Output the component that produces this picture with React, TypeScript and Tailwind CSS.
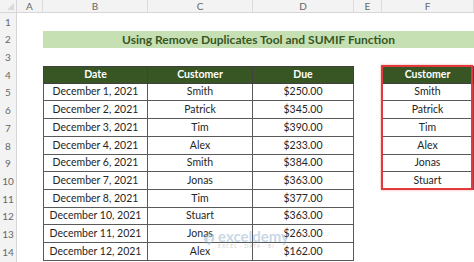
import React from 'react';

// sheet rows 1..14, heights chosen so the grid lands on the screenshot's pixels
const rowHeights = [18, 17, 18, 18, 17, 18, 18, 18, 17, 18, 18, 17, 18, 18];

const data = [
  ['December 1, 2021', 'Smith', '$250.00'],
  ['December 2, 2021', 'Patrick', '$345.00'],
  ['December 3, 2021', 'Tim', '$390.00'],
  ['December 4, 2021', 'Alex', '$233.00'],
  ['December 6, 2021', 'Smith', '$384.00'],
  ['December 7, 2021', 'Jonas', '$363.00'],
  ['December 8, 2021', 'Tim', '$377.00'],
  ['December 10, 2021', 'Stuart', '$363.00'],
  ['December 11, 2021', 'Jonas', '$263.00'],
  ['December 12, 2021', 'Alex', '$162.00'],
];

const unique = ['Smith', 'Patrick', 'Tim', 'Alex', 'Jonas', 'Stuart'];

const cols = 'grid grid-cols-[26px_105px_105px_101px_28px_92px]';

const Cell: React.FC<{ className?: string; children?: React.ReactNode }> = ({ className = '', children }) => (
  <div className={`flex items-center justify-center overflow-hidden whitespace-nowrap ${className}`}>{children}</div>
);

export default function App() {
  return (
    <div className="relative w-[474px] h-[262px] overflow-hidden bg-white font-['Lato','Open_Sans',sans-serif] text-[10.5px] text-[#262626]">
      {/* column letters */}
      <div className="flex h-[13px] bg-[#f3f3f3] border-b border-[#d6d6d6] text-[10px] text-[#666]">
        <div className="relative w-[17px] border-r border-[#d6d6d6]">
          <div className="absolute right-[2px] bottom-[2px] w-0 h-0 border-l-[7px] border-l-transparent border-b-[7px] border-b-[#d9d9d9]" />
        </div>
        <div className={`${cols} flex-1`}>
          {['A', 'B', 'C', 'D', 'E', 'F'].map((c) => (
            <Cell key={c} className="border-r border-[#dcdcdc] leading-none">{c}</Cell>
          ))}
        </div>
      </div>

      <div className="flex h-[249px]">
        {/* row numbers */}
        <div className="w-[17px] bg-[#f3f3f3] border-r border-[#d6d6d6] text-[10px] text-[#666]">
          {rowHeights.map((h, i) => (
            <Cell key={i} className={h === 17 ? 'h-[17px]' : 'h-[18px]'}>{i + 1}</Cell>
          ))}
        </div>

        <div className="flex-1 flex flex-col">
          {rowHeights.map((h, i) => {
            const r = i + 1;
            const hc = h === 17 ? 'h-[17px]' : 'h-[18px]';
            if (r === 2) {
              return (
                <div key={r} className={`${hc} flex`}>
                  <div className="w-[26px]" />
                  <div className="flex-1 flex items-center justify-center bg-[#c6e0b4] text-[12px] font-bold text-[#375623]">
                    Using Remove Duplicates Tool and SUMIF Function
                  </div>
                </div>
              );
            }
            if (r === 4) {
              return (
                <div key={r} className={`${hc} ${cols}`}>
                  <div />
                  <Cell className="bg-[#375623] text-white font-bold border border-[#404040]">Date</Cell>
                  <Cell className="bg-[#375623] text-white font-bold border-y border-r border-[#404040]">Customer</Cell>
                  <Cell className="bg-[#375623] text-white font-bold border-y border-r border-[#404040]">Due</Cell>
                  <div />
                  <Cell className="bg-[#375623] text-white font-bold border-y border-r border-[#404040]">Customer</Cell>
                </div>
              );
            }
            if (r >= 5 && r <= 14) {
              const [d, c, due] = data[r - 5];
              const f = unique[r - 5];
              return (
                <div key={r} className={`${hc} ${cols}`}>
                  <div />
                  <Cell className="border-x border-b border-[#595959]">{d}</Cell>
                  <Cell className="border-r border-b border-[#595959]">{c}</Cell>
                  <Cell className="border-r border-b border-[#595959]">{due}</Cell>
                  <div />
                  {f ? <Cell className="border-r border-b border-[#595959]">{f}</Cell> : <div />}
                </div>
              );
            }
            return <div key={r} className={hc} />;
          })}
        </div>
      </div>

      {/* red highlight around the unique list */}
      <div className="absolute left-[381px] top-[65px] w-[92px] h-[125px] border-2 border-[#e23a3c] shadow-[0_0_2px_rgba(226,58,60,0.5)]" />

      {/* watermark */}
      <div className="absolute left-[202px] top-[229px] flex items-center gap-[2px] opacity-40">
        <svg width="14" height="14" viewBox="0 0 16 16">
          <path d="M2 3 L8 1 L14 3 L14 9 L8 15 L2 9 Z" fill="#7b9cc2" />
          <path d="M5 5 L11 5 L11 7 L7 7 L7 8 L10 8 L10 10 L7 10 L7 11 L11 11" fill="none" stroke="#fff" strokeWidth="1.2" />
        </svg>
        <div className="flex flex-col items-start leading-none">
          <span className="text-[15px] font-bold text-[#7b9cc2]">exceldemy</span>
          <span className="text-[5px] text-[#8a8a8a] tracking-[1px]">EXCEL · DATA · BI</span>
        </div>
      </div>
    </div>
  );
}
